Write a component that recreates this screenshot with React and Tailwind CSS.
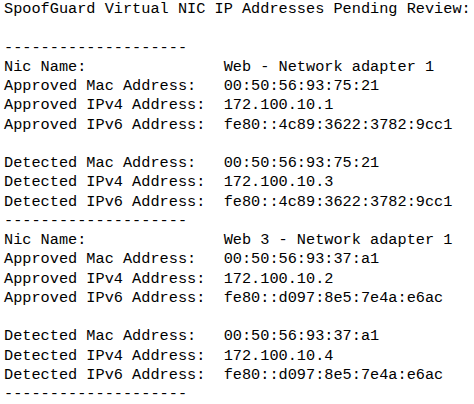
const sections = [
  {
    nic: "Web - Network adapter 1",
    approved: ["00:50:56:93:75:21", "172.100.10.1", "fe80::4c89:3622:3782:9cc1"],
    detected: ["00:50:56:93:75:21", "172.100.10.3", "fe80::4c89:3622:3782:9cc1"],
  },
  {
    nic: "Web 3 - Network adapter 1",
    approved: ["00:50:56:93:37:a1", "172.100.10.2", "fe80::d097:8e5:7e4a:e6ac"],
    detected: ["00:50:56:93:37:a1", "172.100.10.4", "fe80::d097:8e5:7e4a:e6ac"],
  },
];

const pad = (label) => label.padEnd(24, " ");
const dashes = "-".repeat(20);

const buildLines = () => {
  const lines = ["SpoofGuard Virtual NIC IP Addresses Pending Review:", "", dashes];
  sections.forEach((s) => {
    lines.push(pad("Nic Name:") + s.nic);
    lines.push(pad("Approved Mac Address:") + s.approved[0]);
    lines.push(pad("Approved IPv4 Address:") + s.approved[1]);
    lines.push(pad("Approved IPv6 Address:") + s.approved[2]);
    lines.push("");
    lines.push(pad("Detected Mac Address:") + s.detected[0]);
    lines.push(pad("Detected IPv4 Address:") + s.detected[1]);
    lines.push(pad("Detected IPv6 Address:") + s.detected[2]);
    lines.push(dashes);
  });
  return lines;
};

export default function App() {
  const lines = buildLines();
  return (
    <div className="w-[474px] h-[404px] bg-white overflow-hidden pl-[4px]">
      <pre className="font-['Courier_New','Nimbus_Mono_PS','Nimbus_Mono_L','FreeMono','Liberation_Mono',monospace] text-[15.25px] leading-[19.25px] text-black">
        {lines.map((l, i) => (
          <div key={i} className="h-[19.25px]">
            {l || "\u00a0"}
          </div>
        ))}
      </pre>
    </div>
  );
}
